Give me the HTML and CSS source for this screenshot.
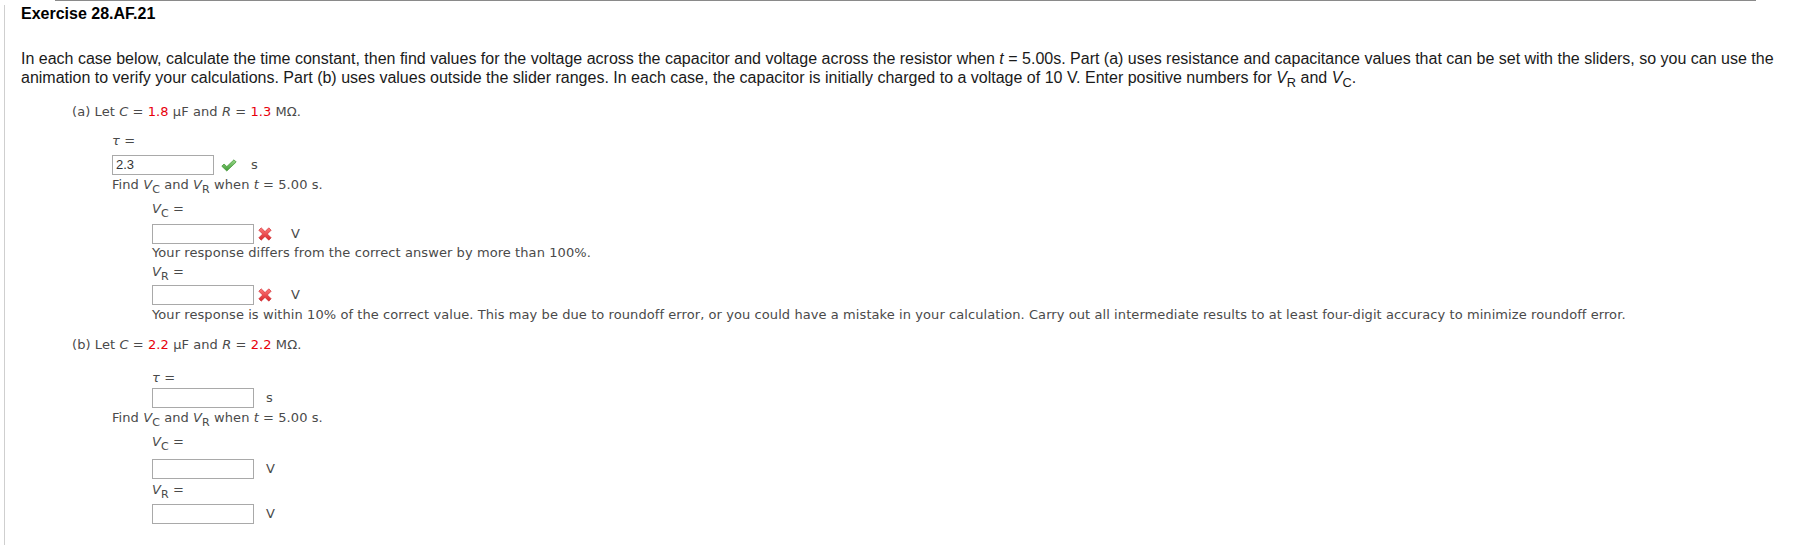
FILE: index.html
```html
<!DOCTYPE html>
<html>
<head>
<meta charset="utf-8">
<title>Exercise 28.AF.21</title>
<link rel="stylesheet" href="styles.css">
</head>
<body>
<div class="topline"></div>
<div class="page">
  <h1 class="title">Exercise 28.AF.21</h1>
  <p class="intro">In each case below, calculate the time constant, then find values for the voltage across the capacitor and voltage across the resistor when <i>t</i> = 5.00s. Part (a) uses resistance and capacitance values that can be set with the sliders, so you can use the animation to verify your calculations. Part (b) uses values outside the slider ranges. In each case, the capacitor is initially charged to a voltage of 10 V. Enter positive numbers for <i>V</i><sub>R</sub> and <i>V</i><sub>C</sub>.</p>

  <div class="part part-a">
    <div class="plabel">(a) Let <i>C</i> = <span class="red">1.8</span> μF and <i>R</i> = <span class="red">1.3</span> MΩ.</div>
    <div class="sub1">
      <div class="lbl tau-a"><i>τ</i> =</div>
      <div class="row r-tau-a">
        <div class="box">2.3</div>
        <span class="icon ok"><svg width="16" height="13" viewBox="0 0 16 13"><defs><linearGradient id="g1" x1="0" y1="0" x2="0" y2="1"><stop offset="0" stop-color="#9bd98a"/><stop offset="1" stop-color="#3d9b35"/></linearGradient></defs><path d="M0.8 7.2 L3 5 L5.8 7.6 L13 0.8 L15.2 3 L5.8 12 Z" fill="url(#g1)" stroke="#4a9a3e" stroke-width="0.8" stroke-linejoin="round"/></svg></span>
        <span class="unit u-ok">s</span>
      </div>
      <div class="line find-a">Find <i>V</i><sub>C</sub> and <i>V</i><sub>R</sub> when <i>t</i> = 5.00 s.</div>
      <div class="sub2">
        <div class="lbl vc-a"><i>V</i><sub>C</sub> =</div>
        <div class="row r-vc-a">
          <div class="box"></div>
          <span class="icon bad"><svg width="14" height="14" viewBox="0 0 14 14"><defs><linearGradient id="g2" x1="0" y1="0" x2="0" y2="1"><stop offset="0" stop-color="#ff7a7a"/><stop offset="1" stop-color="#d9262b"/></linearGradient></defs><path d="M0.8 3.2 L3.2 0.8 L7 4.6 L10.8 0.8 L13.2 3.2 L9.4 7 L13.2 10.8 L10.8 13.2 L7 9.4 L3.2 13.2 L0.8 10.8 L4.6 7 Z" fill="url(#g2)" stroke="#c8242a" stroke-width="0.6" stroke-linejoin="round"/></svg></span>
          <span class="unit u-bad">V</span>
        </div>
        <div class="line resp resp1">Your response differs from the correct answer by more than 100%.</div>
        <div class="lbl vr-a"><i>V</i><sub>R</sub> =</div>
        <div class="row r-vr-a">
          <div class="box"></div>
          <span class="icon bad"><svg width="14" height="14" viewBox="0 0 14 14"><defs><linearGradient id="g3" x1="0" y1="0" x2="0" y2="1"><stop offset="0" stop-color="#ff7a7a"/><stop offset="1" stop-color="#d9262b"/></linearGradient></defs><path d="M0.8 3.2 L3.2 0.8 L7 4.6 L10.8 0.8 L13.2 3.2 L9.4 7 L13.2 10.8 L10.8 13.2 L7 9.4 L3.2 13.2 L0.8 10.8 L4.6 7 Z" fill="url(#g3)" stroke="#c8242a" stroke-width="0.6" stroke-linejoin="round"/></svg></span>
          <span class="unit u-bad">V</span>
        </div>
        <div class="line resp resp2">Your response is within 10% of the correct value. This may be due to roundoff error, or you could have a mistake in your calculation. Carry out all intermediate results to at least four-digit accuracy to minimize roundoff error.</div>
      </div>
    </div>
  </div>

  <div class="part part-b">
    <div class="plabel">(b) Let <i>C</i> = <span class="red">2.2</span> μF and <i>R</i> = <span class="red">2.2</span> MΩ.</div>
    <div class="sub1">
      <div class="sub2">
        <div class="lbl tau-b"><i>τ</i> =</div>
        <div class="row r-tau-b">
          <div class="box"></div>
          <span class="unit">s</span>
        </div>
      </div>
      <div class="line find-b">Find <i>V</i><sub>C</sub> and <i>V</i><sub>R</sub> when <i>t</i> = 5.00 s.</div>
      <div class="sub2">
        <div class="lbl vc-b"><i>V</i><sub>C</sub> =</div>
        <div class="row r-vc-b">
          <div class="box"></div>
          <span class="unit">V</span>
        </div>
        <div class="lbl vr-b"><i>V</i><sub>R</sub> =</div>
        <div class="row r-vr-b">
          <div class="box"></div>
          <span class="unit">V</span>
        </div>
      </div>
    </div>
  </div>
</div>
</body>
</html>
```

FILE: styles.css
```css
html, body {
  margin: 0;
  padding: 0;
  background: #ffffff;
}

.topline {
  margin-left: 55px;
  width: 1701px;
  height: 1px;
  background: #8a8a8a;
}

.page {
  margin: 8px 0 0 4px;
  border-left: 1px solid #cfcfcf;
  padding-left: 16px;
  height: 540px;
  box-sizing: border-box;
}

.title {
  margin: -4px 0 0 0;
  font-family: "Liberation Sans", Arial, sans-serif;
  font-size: 16px;
  line-height: 18px;
  font-weight: bold;
  color: #000;
}

.intro {
  margin: 27px 0 0 0;
  width: 1776px;
  font-family: "Liberation Sans", Arial, sans-serif;
  font-size: 16px;
  letter-spacing: 0;
  line-height: 18.5px;
  color: #1a1a1a;
}

.intro sub {
  font-size: 80%;
  vertical-align: -0.3em;
  line-height: 0;
}

.part {
  font-family: "DejaVu Sans", Verdana, sans-serif;
  font-size: 13px;
  letter-spacing: 0.08px;
  color: #4a4a4a;
}

.part i {
  font-style: italic;
}

.part sub {
  font-size: 85%;
  vertical-align: -0.35em;
  line-height: 0;
}

.red {
  color: #e8000b;
}

.part-a {
  margin: 15px 0 0 51px;
}

.part-b {
  margin: 10px 0 0 51px;
}

.plabel,
.line,
.lbl {
  line-height: 20px;
  height: 20px;
  white-space: nowrap;
}

.sub1 {
  margin-left: 40px;
}

.sub2 {
  margin-left: 40px;
}

.row {
  display: flex;
  align-items: center;
  height: 20px;
}

.box {
  width: 102px;
  height: 20px;
  box-sizing: border-box;
  border: 1px solid #a9a9a9;
  background: #fff;
  font-family: "Liberation Sans", Arial, sans-serif;
  font-size: 13px;
  letter-spacing: 0;
  line-height: 17px;
  padding-left: 3px;
  color: #333;
}

.icon {
  display: inline-flex;
  align-items: center;
}

.icon.ok {
  margin-left: 7px;
  width: 18px;
}

.icon.bad {
  margin-left: 4px;
  width: 21px;
}

.unit {
  margin-left: 12px;
  line-height: 20px;
}

.unit.u-ok {
  margin-left: 12px;
}

.unit.u-bad {
  margin-left: 12px;
}

/* vertical rhythm part (a) */
.tau-a { margin-top: 9px; }
.r-tau-a { margin-top: 4px; }
.find-a { margin-top: 0; }
.vc-a { margin-top: 4px; }
.r-vc-a { margin-top: 5px; }
.resp { line-height: 18px; height: 18px; }
.resp1 { margin-top: 0; }
.vr-a { margin-top: 0; }
.r-vr-a { margin-top: 3px; }
.resp2 { line-height: 20px; height: 20px; }

/* vertical rhythm part (b) */
.tau-b { margin-top: 13px; }
.r-tau-b { margin-top: 0; }
.find-b { margin-top: 0; }
.vc-b { margin-top: 4px; }
.r-vc-b { margin-top: 7px; }
.vr-b { margin-top: 1px; }
.r-vr-b { margin-top: 4px; }
```
